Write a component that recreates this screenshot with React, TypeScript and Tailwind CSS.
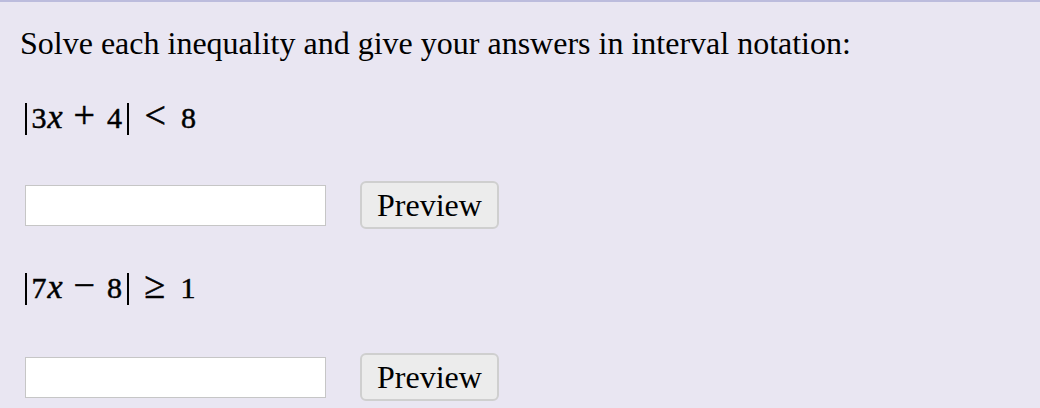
function Bar({ after = false }: { after?: boolean }) {
  return (
    <span
      className={`inline-block w-[1.5px] h-[32px] bg-black self-start mt-[6px] ${after ? "ml-[5px]" : ""}`}
    />
  );
}

function Row() {
  return (
    <div className="flex items-center pl-[25px] h-[48px]">
      <div className="w-[301px] h-[41px] bg-white border border-[#c6c6c6] mt-[1px]" />
      <button className="ml-[34px] h-[48px] w-[139px] rounded-[6px] border-2 border-[#cfcfcf] bg-[#ececec] text-[32px] text-black leading-none">
        Preview
      </button>
    </div>
  );
}

export default function App() {
  const math =
    "pl-[25px] flex items-baseline h-[36px] leading-[36px] text-[30px] font-['Liberation_Serif',serif] [-webkit-text-stroke:0.5px_black]";
  return (
    <div className="w-[1040px] h-[408px] bg-[#e9e6f2] border-t-2 border-[#bcbcdd] overflow-hidden font-['Liberation_Serif',serif] text-black">
      <p className="pl-[20px] pt-[23px] text-[32px] leading-[36px]">
        Solve each inequality and give your answers in interval notation:
      </p>
      <div className={`${math} mt-[36px]`}>
        <Bar />
        <span className="ml-[5px]">3</span>
        <span className="italic text-[34px] ml-[1px] tracking-[2px]">x</span>
        <span className="text-[38px] ml-[9px]">+</span>
        <span className="ml-[12px]">4</span>
        <Bar after />
        <span className="text-[38px] ml-[16px]">&lt;</span>
        <span className="ml-[15px]">8</span>
      </div>
      <div className="mt-[48px]">
        <Row />
      </div>
      <div className={`${math} mt-[38px]`}>
        <Bar />
        <span className="ml-[5px]">7</span>
        <span className="italic text-[34px] ml-[1px] tracking-[2px]">x</span>
        <span className="text-[38px] ml-[9px]">−</span>
        <span className="ml-[12px]">8</span>
        <Bar after />
        <span className="text-[38px] ml-[16px]">≥</span>
        <span className="ml-[15px]">1</span>
      </div>
      <div className="mt-[50px]">
        <Row />
      </div>
    </div>
  );
}
